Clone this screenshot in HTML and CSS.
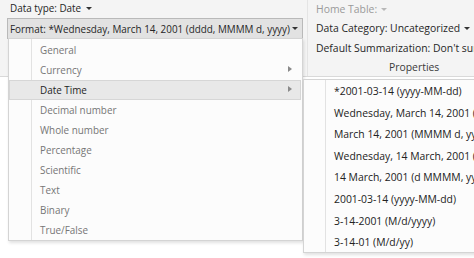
FILE: index.html
```html
<!DOCTYPE html>
<html>
<head>
<meta charset="utf-8">
<link rel="stylesheet" href="styles.css">
</head>
<body>
<div class="ribbon">
  <div class="group-left">
    <div class="dt-row">Data type: Date <span class="caret"></span></div>
    <div class="format-btn"><span>Format: *Wednesday, March 14, 2001 (dddd, MMMM d, yyyy)</span><span class="caret"></span></div>
  </div>
  <div class="group-right">
    <div class="rrow muted">Home Table: <span class="caret light"></span></div>
    <div class="rrow">Data Category: Uncategorized <span class="caret"></span></div>
    <div class="rrow">Default Summarization: Don't summarize <span class="caret"></span></div>
    <div class="glabel">Properties</div>
  </div>
</div>

<div class="menu main-menu">
  <div class="item">General</div>
  <div class="item">Currency<span class="arrow"></span></div>
  <div class="item active">Date Time<span class="arrow"></span></div>
  <div class="item">Decimal number</div>
  <div class="item">Whole number</div>
  <div class="item">Percentage</div>
  <div class="item">Scientific</div>
  <div class="item">Text</div>
  <div class="item">Binary</div>
  <div class="item">True/False</div>
</div>

<div class="menu sub-menu">
  <div class="sitem">*2001-03-14 (yyyy-MM-dd)</div>
  <div class="sitem">Wednesday, March 14, 2001 (dddd, MMMM d, yyyy)</div>
  <div class="sitem">March 14, 2001 (MMMM d, yyyy)</div>
  <div class="sitem">Wednesday, 14 March, 2001 (dddd, d MMMM, yyyy)</div>
  <div class="sitem">14 March, 2001 (d MMMM, yyyy)</div>
  <div class="sitem">2001-03-14 (yyyy-MM-dd)</div>
  <div class="sitem">3-14-2001 (M/d/yyyy)</div>
  <div class="sitem">3-14-01 (M/d/yy)</div>
</div>
</body>
</html>
```
FILE: styles.css
```css
html, body {
  margin: 0;
  padding: 0;
}
body {
  width: 474px;
  height: 258px;
  overflow: hidden;
  position: relative;
  background: #ffffff;
  font-family: "Open Sans", "Noto Sans", sans-serif;
  font-size: 10.4px;
  color: #262626;
}
.ribbon {
  display: flex;
  height: 76px;
  background: #f4f4f4;
  border-bottom: 1px solid #d9d9d9;
  overflow: hidden;
}
.group-left {
  width: 296px;
  padding-left: 7px;
  flex: none;
  font-size: 9.9px;
}
.dt-row {
  height: 17px;
  line-height: 17px;
  padding-left: 3px;
  display: flex;
  align-items: center;
  gap: 3px;
  white-space: nowrap;
}
.caret {
  display: inline-block;
  width: 0;
  height: 0;
  border-left: 3px solid transparent;
  border-right: 3px solid transparent;
  border-top: 3px solid #333;
  margin-left: 2px;
}
.caret.light { border-top-color: #b8b8b8; }
.format-btn {
  box-sizing: border-box;
  height: 21px;
  margin-top: 1px;
  border: 1px solid #b9b9b9;
  background: #e2e2e2;
  display: flex;
  align-items: center;
  justify-content: space-between;
  padding: 0 4px 0 2px;
  white-space: nowrap;
  overflow: hidden;
}
.group-right {
  flex: 1;
  min-width: 0;
  border-left: 1px solid #e4e4e4;
  margin-left: 4px;
  padding-left: 8px;
  display: flex;
  flex-direction: column;
  white-space: nowrap;
}
.rrow {
  height: 20px;
  line-height: 20px;
  display: flex;
  align-items: center;
  gap: 2px;
}
.rrow:first-child { height: 18px; }
.muted { color: #9a9a9a; }
.glabel {
  height: 18px;
  line-height: 18px;
  padding-left: 73px;
  color: #3a3a3a;
}
.menu {
  position: absolute;
  box-sizing: border-box;
  background-color: #fcfcfc;
  border: 1px solid #d4d4d4;
}
.main-menu {
  left: 8px;
  top: 38px;
  width: 295px;
  height: 203px;
  padding-top: 1px;
  font-size: 9.9px;
  background-image: linear-gradient(to right, transparent 22px, #e2e2e2 22px, #e2e2e2 23px, transparent 23px);
  box-shadow: 1px 2px 3px rgba(0, 0, 0, 0.12);
}
.item {
  box-sizing: border-box;
  height: 20px;
  line-height: 18px;
  padding-left: 30px;
  margin-right: 1px;
  color: #767676;
  position: relative;
  border: 1px solid transparent;
}
.item.active {
  background: #e8e8e8;
  border-color: #d6d6d6;
  color: #1f1f1f;
}
.arrow {
  position: absolute;
  right: 8px;
  top: 5px;
  width: 0;
  height: 0;
  border-top: 3.5px solid transparent;
  border-bottom: 3.5px solid transparent;
  border-left: 4px solid #8a8a8a;
}
.sub-menu {
  left: 303px;
  top: 79px;
  width: 190px;
  height: 174px;
  padding-top: 1px;
  background-image: linear-gradient(to right, transparent 21px, #e2e2e2 21px, #e2e2e2 22px, transparent 22px);
  box-shadow: 1px 2px 3px rgba(0, 0, 0, 0.12);
}
.sitem {
  height: 21.6px;
  line-height: 21.6px;
  padding-left: 30px;
  white-space: nowrap;
  color: #222;
}
```
